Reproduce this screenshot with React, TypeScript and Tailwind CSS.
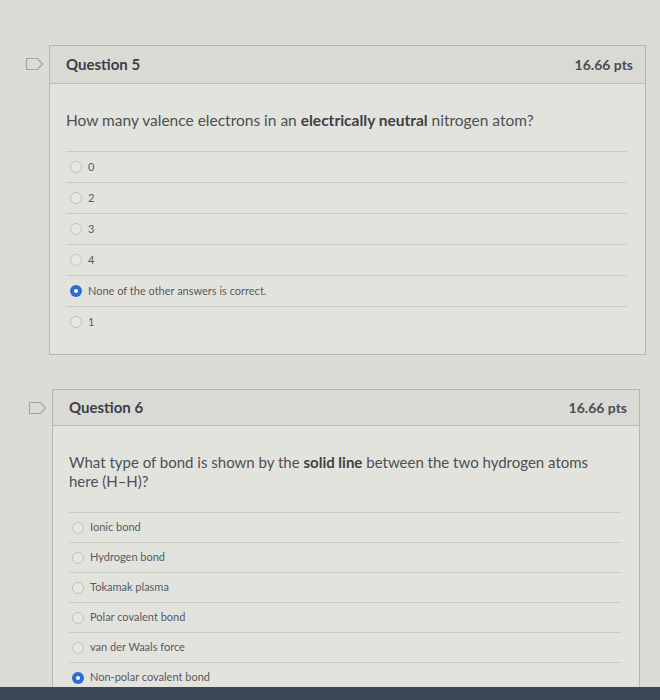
import React from 'react';

interface QuestionProps {
  number: number;
  points: string;
  prompt: React.ReactNode;
  answers: string[];
  selected: number;
  offset: string;
  width: string;
  headerH: string;
  rowH: string;
  rowPad: string;
  promptSize: string;
  textMax?: string;
}

// small "flag question" tag shown left of each card
const FlagIcon: React.FC = () => (
  <svg width="19" height="14" viewBox="0 0 19 14" fill="none">
    <path d="M1.5 1.5 H12.5 L17.5 7 L12.5 12.5 H1.5 Z" stroke="#a3a3a0" strokeWidth="1.2" strokeLinejoin="round" />
  </svg>
);

const Radio: React.FC<{ checked: boolean }> = ({ checked }) =>
  checked ? (
    <span className="flex h-3 w-3 shrink-0 items-center justify-center rounded-full bg-[#2b6dd3]">
      <span className="h-1 w-1 rounded-full bg-white" />
    </span>
  ) : (
    <span className="h-3 w-3 shrink-0 rounded-full border border-[#c2c2be] bg-[#e8e8e3]" />
  );

const Question: React.FC<QuestionProps> = ({
  number,
  points,
  prompt,
  answers,
  selected,
  offset,
  width,
  headerH,
  rowH,
  rowPad,
  promptSize,
  textMax = '',
}) => (
  <div className={`flex ${offset}`}>
    {/* flag column */}
    <div className="flex w-[24px] shrink-0 pt-[12px]">
      <FlagIcon />
    </div>

    <div className={`${width} shrink-0 border border-[#b7b7b2] bg-[#e3e3de]`}>
      {/* header */}
      <div className={`flex ${headerH} items-center justify-between border-b border-[#bdbdb8] bg-[#dadad5] pl-[16px] pr-[12px]`}>
        <h3 className="text-[15px] font-bold text-[#3c3e47]">Question {number}</h3>
        <span className="text-[14px] font-bold text-[#4a4c53]">{points}</span>
      </div>

      {/* body */}
      <div className="pl-[16px] pr-[18px] pt-[27px] pb-[17px]">
        <p className={`${promptSize} leading-[19px] text-[#4d4f55] ${textMax}`}>{prompt}</p>
        <ul className="mt-[21px]">
          {answers.map((a, i) => (
            <li
              key={a}
              className={`flex ${rowH} ${rowPad} items-center gap-[6px] border-t border-[#cacac5] text-[11px] text-[#585a5f]`}
            >
              <Radio checked={i === selected} />
              <span>{a}</span>
            </li>
          ))}
        </ul>
      </div>
    </div>
  </div>
);

export default function App() {
  return (
    <div className="relative h-[700px] overflow-hidden bg-[#dbdbd7] font-['Lato','Open_Sans',sans-serif]">
      <div className="flex flex-col gap-[34px] pt-[45px]">
        <Question
          number={5}
          points="16.66 pts"
          prompt={
            <>
              How many valence electrons in an <b className="font-bold text-[#3f4147]">electrically neutral</b> nitrogen atom?
            </>
          }
          answers={['0', '2', '3', '4', 'None of the other answers is correct.', '1']}
          selected={4}
          offset="pl-[25px]"
          width="w-[597px]"
          headerH="h-[38px]"
          rowH="h-[31px]"
          rowPad="pl-[4px]"
          promptSize="text-[15.5px]"
        />
        <Question
          number={6}
          points="16.66 pts"
          prompt={
            <>
              What type of bond is shown by the <b className="font-bold text-[#3f4147]">solid line</b> between the two hydrogen
              atoms here (H–H)?
            </>
          }
          answers={[
            'Ionic bond',
            'Hydrogen bond',
            'Tokamak plasma',
            'Polar covalent bond',
            'van der Waals force',
            'Non-polar covalent bond',
          ]}
          selected={5}
          offset="pl-[28px]"
          width="w-[588px]"
          headerH="h-[36px]"
          rowH="h-[30px]"
          rowPad="pl-[3px]"
          promptSize="text-[15px]"
          textMax="max-w-[540px]"
        />
      </div>

      {/* dark taskbar strip at the bottom */}
      <div className="fixed bottom-0 left-0 right-0 h-[13px] bg-[#3b4757]" />
    </div>
  );
}
